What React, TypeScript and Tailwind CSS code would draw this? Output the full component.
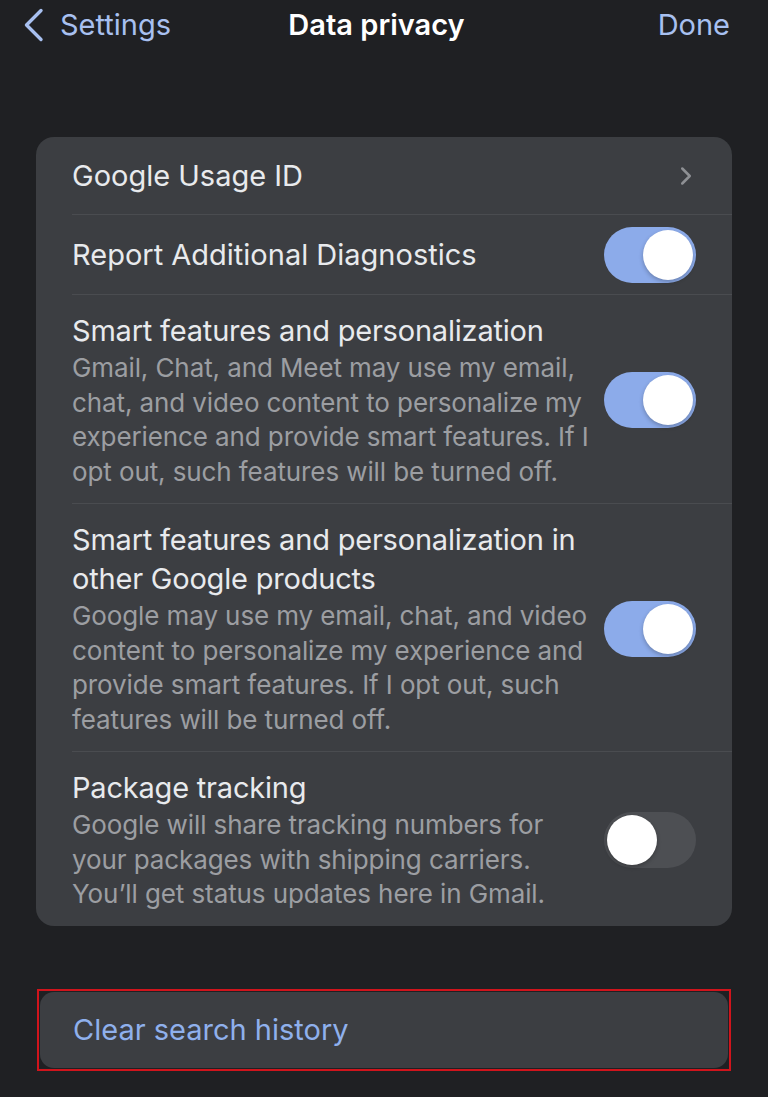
import { ChevronRight } from 'lucide-react'

function Toggle({ on }: { on: boolean }) {
  return (
    <div
      className={`relative w-[92px] h-[56px] rounded-full shrink-0 ${on ? 'bg-[#8cabea]' : 'bg-[#4d4f53]'}`}
    >
      <div
        className={`absolute top-[3px] w-[50px] h-[50px] rounded-full bg-white shadow-[0_2px_4px_rgba(0,0,0,0.25)] ${on ? 'right-[3px]' : 'left-[3px]'}`}
      />
    </div>
  )
}

const rows = [
  {
    title: 'Smart features and personalization',
    desc: 'Gmail, Chat, and Meet may use my email, chat, and video content to personalize my experience and provide smart features. If I opt out, such features will be turned off.',
    on: true,
  },
  {
    title: 'Smart features and personalization in other Google products',
    desc: 'Google may use my email, chat, and video content to personalize my experience and provide smart features. If I opt out, such features will be turned off.',
    on: true,
  },
  {
    title: 'Package tracking',
    desc: 'Google will share tracking numbers for your packages with shipping carriers. You’ll get status updates here in Gmail.',
    on: false,
  },
]

export default function App() {
  return (
    <div
      className="min-h-[1097px] bg-[#1f2023] text-[#e8eaed] overflow-hidden"
      style={{ fontFamily: 'Inter, "Noto Sans", sans-serif' }}
    >
      {/* Nav bar */}
      <div className="h-[49px] flex items-center justify-between pl-[23px] pr-[38px] text-[29px]">
        <div className="flex items-center text-[#a8c0f0] w-[200px]">
          <svg width="22" height="34" viewBox="0 0 22 34" fill="none" className="mr-[15px]">
            <polyline
              points="18,2.5 3.5,17 18,31.5"
              stroke="currentColor"
              strokeWidth="3.4"
              strokeLinecap="round"
              strokeLinejoin="round"
            />
          </svg>
          <span>Settings</span>
        </div>
        <div className="font-semibold text-white">Data privacy</div>
        <div className="text-[#a8c0f0] w-[200px] text-right">Done</div>
      </div>

      {/* Main card */}
      <div className="mt-[88px] mx-[36px] rounded-[18px] bg-[#3c3e42] pl-[36px]">
        <div className="flex items-center justify-between h-[78px] pr-[31px] border-b border-[#4a4c50]">
          <span className="text-[29px]">Google Usage ID</span>
          <ChevronRight className="w-[30px] h-[30px] text-[#8e9094]" strokeWidth={2} />
        </div>
        <div className="flex items-center justify-between h-[80px] pr-[36px] border-b border-[#4a4c50]">
          <span className="text-[29px]">Report Additional Diagnostics</span>
          <Toggle on />
        </div>
        {rows.map((r, i) => (
          <div
            key={r.title}
            className={`flex items-center justify-between gap-[14px] pr-[36px] pt-[16px] pb-[14px] ${i < rows.length - 1 ? 'border-b border-[#4a4c50]' : ''}`}
          >
            <div className="flex-1">
              <div className="text-[29px] leading-[39px] tracking-[-0.2px]">{r.title}</div>
              <div className="mt-[1px] text-[26px] leading-[34.5px] text-[#9c9ea2] tracking-[-0.1px]">
                {r.desc}
              </div>
            </div>
            <Toggle on={r.on} />
          </div>
        ))}
      </div>

      {/* Clear search history */}
      <div className="mt-[63px] mx-[37px] border-2 border-[#d0141c] p-[1px]">
        <div className="h-[76px] rounded-[14px] bg-[#3c3e42] flex items-center pl-[33px]">
          <span className="text-[29px] text-[#8fb0ec]">Clear search history</span>
        </div>
      </div>
    </div>
  )
}
